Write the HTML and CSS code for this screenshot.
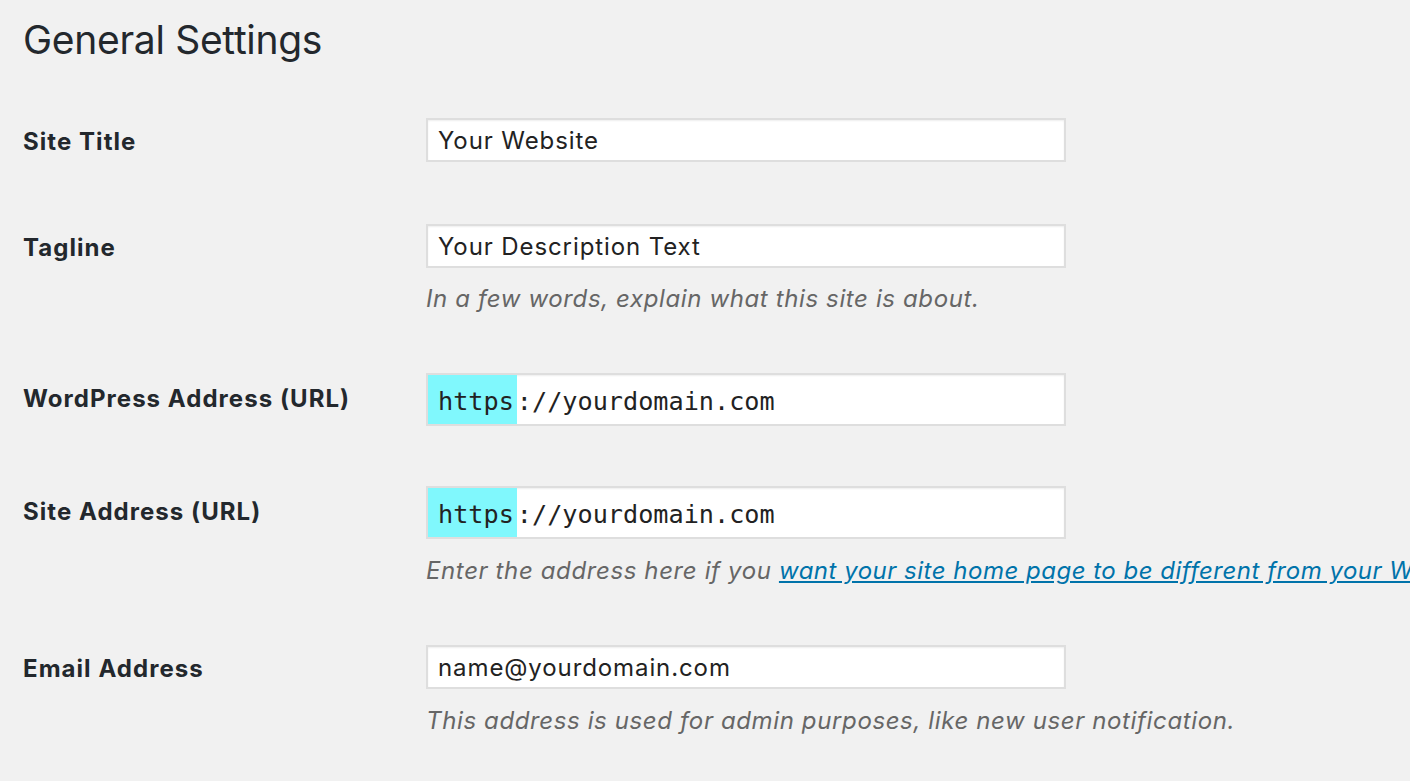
FILE: index.html
```html
<!DOCTYPE html>
<html>
<head>
<meta charset="utf-8">
<link rel="stylesheet" href="styles.css">
</head>
<body>
<div class="wrap">
  <h1 class="title">General Settings</h1>
  <div class="form">
    <div class="row row-1">
      <div class="label">Site Title</div>
      <div class="cell">
        <div class="input">Your Website</div>
      </div>
    </div>
    <div class="row row-2">
      <div class="label">Tagline</div>
      <div class="cell">
        <div class="input">Your Description Text</div>
        <p class="desc">In a few words, explain what this site is about.</p>
      </div>
    </div>
    <div class="row row-3">
      <div class="label label-tall">WordPress Address (URL)</div>
      <div class="cell">
        <div class="input input-mono"><span class="sel">https</span><span class="rest">://yourdomain.com</span></div>
      </div>
    </div>
    <div class="row row-4">
      <div class="label label-tall">Site Address (URL)</div>
      <div class="cell">
        <div class="input input-mono"><span class="sel">https</span><span class="rest">://yourdomain.com</span></div>
        <p class="desc desc-url">Enter the address here if you <a href="#" class="link">want your site home page to be different from your WordPress installation directory.</a></p>
      </div>
    </div>
    <div class="row row-5">
      <div class="label">Email Address</div>
      <div class="cell">
        <div class="input">name@yourdomain.com</div>
        <p class="desc desc-email">This address is used for admin purposes, like new user notification.</p>
      </div>
    </div>
  </div>
</div>
</body>
</html>
```

FILE: styles.css
```css
html, body {
  margin: 0;
  padding: 0;
  background: #f1f1f1;
  overflow: hidden;
}
body {
  font-family: Inter, "Noto Sans", sans-serif;
  color: #23282d;
}
.wrap {
  padding: 0 0 0 23px;
  width: 1387px;
  overflow: hidden;
}
.title {
  margin: 0;
  padding-top: 16px;
  font-size: 39px;
  font-weight: 400;
  line-height: 48px;
  letter-spacing: -0.3px;
  color: #23282d;
}
.form {
  display: flex;
  flex-direction: column;
  margin-top: 54px;
}
.row {
  display: grid;
  grid-template-columns: 403px 1fr;
}
.row-2 { margin-top: 62px; }
.row-3 { margin-top: 59px; }
.row-4 { margin-top: 60px; }
.row-5 { margin-top: 59px; }
.label {
  height: 44px;
  display: flex;
  align-items: center;
  padding-top: 2px;
  box-sizing: border-box;
  font-size: 24px;
  font-weight: 700;
  letter-spacing: 1.05px;
  color: #23282d;
  white-space: nowrap;
}
.label-tall {
  height: 53px;
  padding-top: 0;
  padding-bottom: 3px;
}
.cell {
  min-width: 0;
}
.input {
  width: 640px;
  height: 44px;
  box-sizing: border-box;
  background: #fff;
  border: 2px solid #dedede;
  box-shadow: inset 0 1px 2px rgba(0,0,0,0.07);
  padding: 0 10px;
  display: flex;
  align-items: center;
  font-size: 24px;
  letter-spacing: 0.9px;
  color: #222;
  white-space: nowrap;
}
.input-mono {
  height: 53px;
  padding: 0;
  align-items: stretch;
  font-family: "DejaVu Sans Mono", "Liberation Mono", monospace;
  font-size: 25.2px;
  letter-spacing: 0;
}
.sel,
.rest {
  display: flex;
  align-items: center;
  padding-top: 4px;
}
.sel {
  background: #80f8fd;
  padding-left: 10px;
  padding-right: 3px;
}
.desc {
  margin: 16px 0 0;
  font-size: 24px;
  line-height: 30px;
  font-style: italic;
  letter-spacing: 0.62px;
  color: #666;
}
.desc-url {
  margin-top: 17px;
  white-space: nowrap;
}
.desc-email {
  margin-top: 17px;
}
.link {
  color: #0073aa;
  text-decoration: underline;
  letter-spacing: 0.5px;
}
```
